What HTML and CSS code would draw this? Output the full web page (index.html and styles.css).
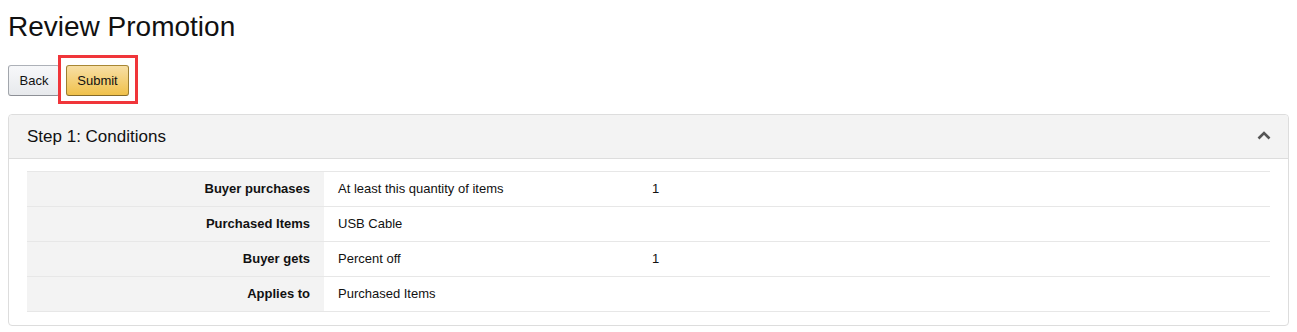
FILE: index.html
```html
<!DOCTYPE html>
<html>
<head>
<meta charset="utf-8">
<title>Review Promotion</title>
<link rel="stylesheet" href="styles.css">
</head>
<body>
  <h1 class="page-title">Review Promotion</h1>
  <div class="actions">
    <button class="btn btn-secondary">Back</button>
    <span class="highlight">
      <button class="btn btn-primary">Submit</button>
    </span>
  </div>
  <section class="panel">
    <div class="panel-header">
      <span class="panel-title">Step 1: Conditions</span>
      <svg class="chevron" width="14" height="9" viewBox="0 0 14 9" aria-hidden="true">
        <path d="M1.5 7.5 L7 2 L12.5 7.5" fill="none" stroke="#555" stroke-width="2.6"/>
      </svg>
    </div>
    <div class="panel-body">
      <table class="review-table">
        <tr>
          <th>Buyer purchases</th>
          <td class="val">At least this quantity of items</td>
          <td class="extra">1</td>
        </tr>
        <tr>
          <th>Purchased Items</th>
          <td class="val">USB Cable</td>
          <td class="extra"></td>
        </tr>
        <tr>
          <th>Buyer gets</th>
          <td class="val">Percent off</td>
          <td class="extra">1</td>
        </tr>
        <tr>
          <th>Applies to</th>
          <td class="val">Purchased Items</td>
          <td class="extra"></td>
        </tr>
      </table>
    </div>
  </section>
</body>
</html>
```

FILE: styles.css
```css
html, body {
  margin: 0;
  background: #fff;
}
body {
  padding: 8px;
  font-family: "Liberation Sans", Arial, sans-serif;
  color: #111;
  font-size: 13px;
}
.page-title {
  margin: 2px 0 0 0;
  font-size: 28px;
  line-height: 34px;
  font-weight: normal;
  color: #111;
}
.actions {
  display: flex;
  gap: 6px;
  margin-top: 21px;
  align-items: flex-start;
}
.btn {
  font-family: "Liberation Sans", Arial, sans-serif;
  font-size: 13px;
  height: 31px;
  border-radius: 3px;
  padding: 0 11px;
  color: #111;
  cursor: pointer;
}
.btn-secondary {
  width: 52px;
  padding: 0;
  background: linear-gradient(to bottom, #f7f8fa, #e7e9ec);
  border: 1px solid #adb1b8;
  border-color: #adb1b8 #a2a6ac #8d9096;
}
.btn-primary {
  width: 63px;
  padding: 0;
  background: linear-gradient(to bottom, #f7dfa5, #f0c14b);
  border: 1px solid #a88734;
  border-color: #a88734 #9c7e31 #846a29;
}
.highlight {
  position: relative;
  display: inline-flex;
}
.highlight::after {
  content: "";
  position: absolute;
  top: -10px;
  left: -8px;
  right: -9px;
  bottom: -8px;
  border: 3px solid #f0353a;
  pointer-events: none;
}
.panel {
  margin-top: 18px;
  border: 1px solid #ddd;
  border-radius: 4px;
  background: #fff;
}
.panel-header {
  display: flex;
  align-items: center;
  justify-content: space-between;
  height: 43px;
  padding: 0 17px 0 18px;
  background: #f3f3f3;
  border-bottom: 1px solid #ddd;
  border-radius: 4px 4px 0 0;
}
.panel-title {
  font-size: 17px;
  color: #111;
}
.chevron {
  display: block;
  margin-top: -2px;
}
.panel-body {
  padding: 12px 18px 13px 18px;
}
.review-table {
  width: 100%;
  border-collapse: collapse;
  border-top: 1px solid #e7e7e7;
}
.review-table tr {
  border-bottom: 1px solid #e7e7e7;
}
.review-table th,
.review-table td {
  height: 33px;
  padding: 0 14px 1px 14px;
  vertical-align: middle;
  font-size: 13px;
  color: #111;
}
.review-table th {
  width: 269px;
  text-align: right;
  font-weight: bold;
  background: #f3f3f3;
}
.review-table td.val {
  width: 286px;
  text-align: left;
}
.review-table td.extra {
  text-align: left;
}
```
